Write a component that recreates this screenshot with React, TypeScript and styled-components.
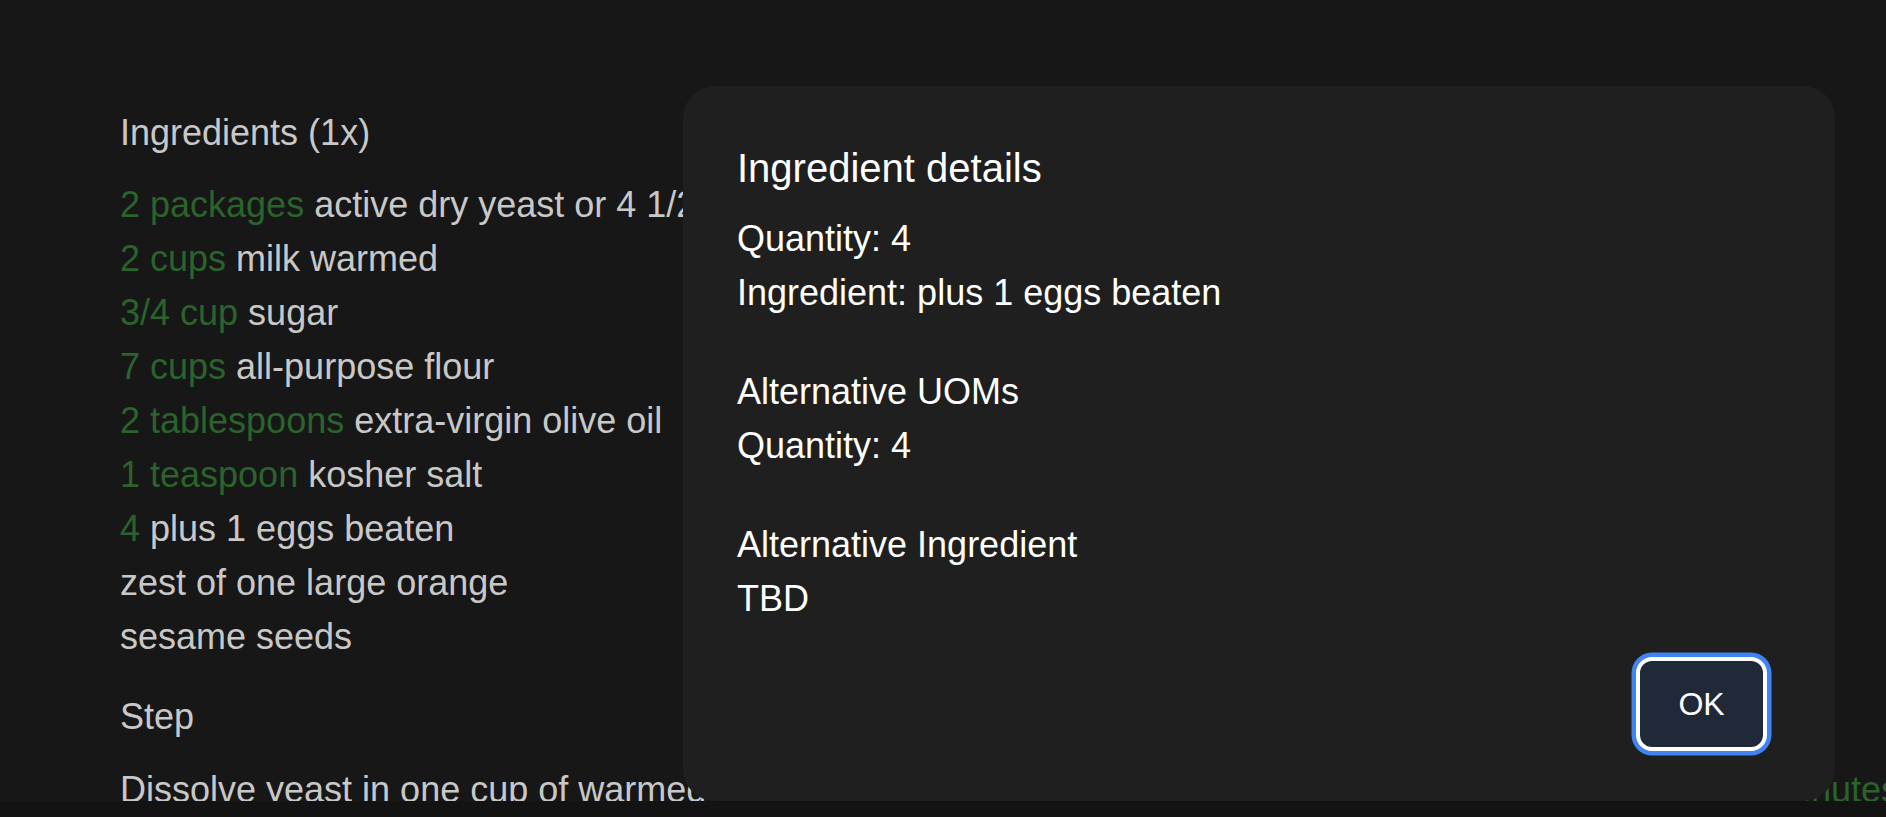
import React from "react";
import styled, { createGlobalStyle } from "styled-components";

const GlobalStyle = createGlobalStyle`
  html, body {
    margin: 0;
    padding: 0;
    background: #131313;
    overflow: hidden;
  }
  body {
    font-family: "Liberation Sans", Arial, Helvetica, sans-serif;
    -webkit-font-smoothing: antialiased;
  }
  * { box-sizing: border-box; }
`;

const Page = styled.main`
  height: 801px;
  background: #171717;
  padding: 106px 0 0 120px;
  color: #c8c8c8;
  font-size: 36px;
  line-height: 54px;
`;

const SectionHeading = styled.h2<{ $top?: number; $bottom: number }>`
  margin: ${(p) => p.$top ?? 0}px 0 ${(p) => p.$bottom}px;
  font-size: 36px;
  line-height: 54px;
  font-weight: 400;
`;

const IngredientList = styled.ul`
  list-style: none;
  margin: 0;
  padding: 0;
`;

const IngredientItem = styled.li`
  white-space: nowrap;
`;

const Qty = styled.span`
  color: #2a632c;
`;

const StepText = styled.p`
  margin: 0;
  white-space: nowrap;
`;

const Dialog = styled.div`
  position: fixed;
  left: 683px;
  top: 86px;
  width: 1152px;
  height: 715px;
  padding: 58px 54px 50px;
  background: #1f1f1f;
  border-radius: 32px;
  color: #ffffff;
  display: flex;
  flex-direction: column;
`;

const DialogTitle = styled.h3`
  margin: 0 0 20px;
  font-size: 40px;
  line-height: 48px;
  font-weight: 400;
`;

const Sections = styled.div`
  display: flex;
  flex-direction: column;
  gap: 45px;
`;

const DetailBlock = styled.div`
  display: flex;
  flex-direction: column;
`;

const DetailLine = styled.div`
  font-size: 36px;
  line-height: 54px;
`;

const Footer = styled.div`
  display: flex;
  justify-content: flex-end;
  margin-top: 31px;
  padding-right: 14px;
`;

const OkButton = styled.button`
  width: 131px;
  height: 94px;
  border: 4px solid #ffffff;
  border-radius: 16px;
  background: #1f2937;
  color: #ffffff;
  font-family: "Liberation Sans", Arial, sans-serif;
  font-size: 32px;
  box-shadow: 0 0 0 4.5px #3f84f2;
  outline: none;
  cursor: pointer;
  padding: 0;
`;

const ingredients: { qty?: string; name: string }[] = [
  { qty: "2 packages", name: "active dry yeast or 4 1/2 teaspoons" },
  { qty: "2 cups", name: "milk warmed" },
  { qty: "3/4 cup", name: "sugar" },
  { qty: "7 cups", name: "all-purpose flour" },
  { qty: "2 tablespoons", name: "extra-virgin olive oil" },
  { qty: "1 teaspoon", name: "kosher salt" },
  { qty: "4", name: "plus 1 eggs beaten" },
  { name: "zest of one large orange" },
  { name: "sesame seeds" },
];

export default function App() {
  return (
    <>
      <GlobalStyle />
      <Page>
        <SectionHeading $bottom={18}>Ingredients (1x)</SectionHeading>
        <IngredientList>
          {ingredients.map((it, i) => (
            <IngredientItem key={i}>
              {it.qty && <Qty>{it.qty}</Qty>}
              {it.qty ? " " : ""}
              {it.name}
            </IngredientItem>
          ))}
        </IngredientList>
        <SectionHeading $top={26} $bottom={19}>
          Step
        </SectionHeading>
        <StepText>
          Dissolve yeast in one cup of warmed milk with one teaspoon sugar and
          set aside to activate for about <Qty>5 minutes</Qty>.
        </StepText>
      </Page>
      <Dialog role="dialog" aria-label="Ingredient details">
        <DialogTitle>Ingredient details</DialogTitle>
        <Sections>
          <DetailBlock>
            <DetailLine>Quantity: 4</DetailLine>
            <DetailLine>Ingredient: plus 1 eggs beaten</DetailLine>
          </DetailBlock>
          <DetailBlock>
            <DetailLine>Alternative UOMs</DetailLine>
            <DetailLine>Quantity: 4</DetailLine>
          </DetailBlock>
          <DetailBlock>
            <DetailLine>Alternative Ingredient</DetailLine>
            <DetailLine>TBD</DetailLine>
          </DetailBlock>
        </Sections>
        <Footer>
          <OkButton>OK</OkButton>
        </Footer>
      </Dialog>
    </>
  );
}
